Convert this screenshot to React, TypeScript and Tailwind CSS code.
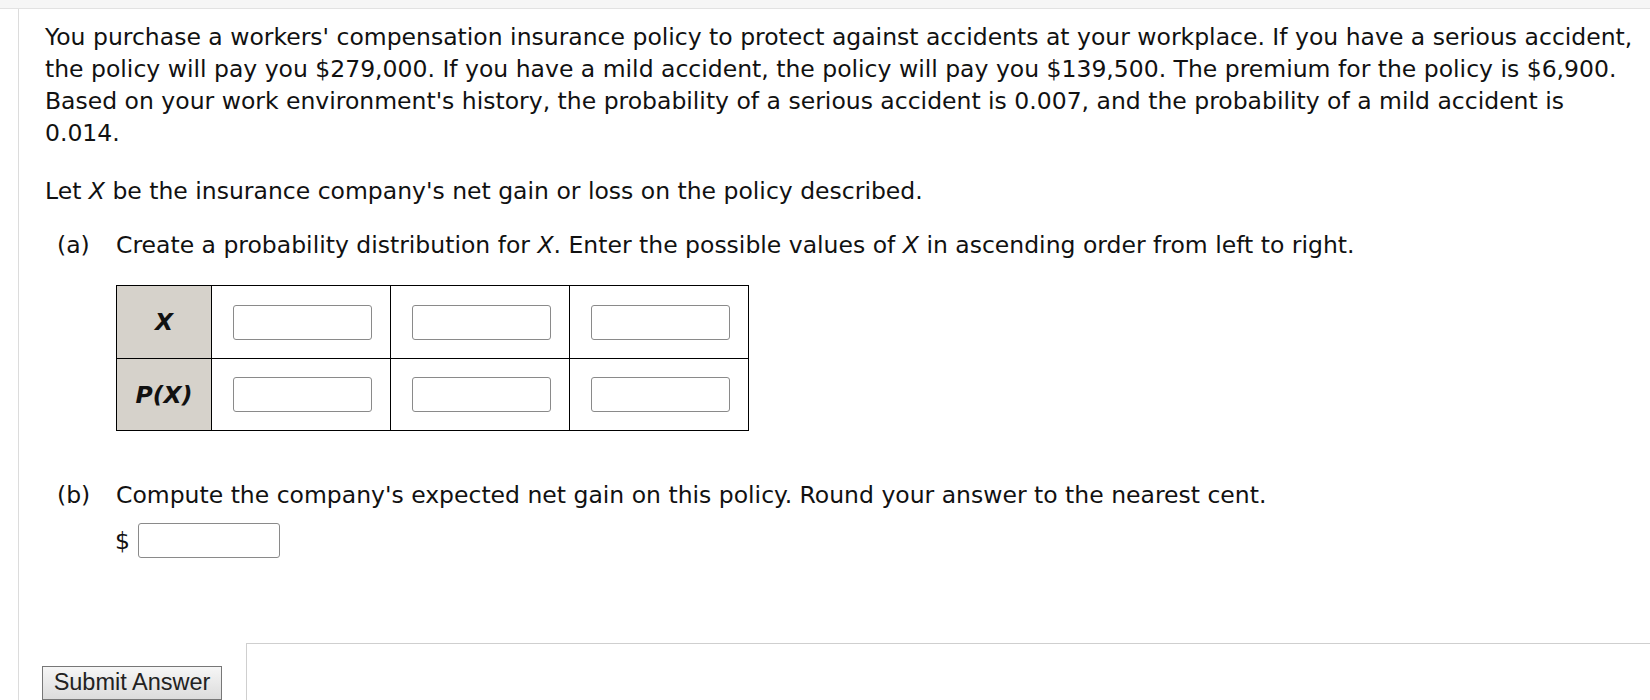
import React from 'react';

const font = { fontFamily: '"DejaVu Sans", Verdana, sans-serif' };

function Box({ className = '' }: { className?: string }) {
  return (
    <input
      type="text"
      className={`h-[35px] w-[139px] rounded-[3px] border border-[#8a8a8a] bg-white outline-none ${className}`}
    />
  );
}

export default function App() {
  const cols = [0, 1, 2];

  return (
    <div className="flex h-[700px] w-full flex-col overflow-hidden bg-white text-[#111]" style={font}>
      <div className="h-[9px] border-b border-[#e2e2e2] bg-[#f6f6f6]" />
      <div className="flex flex-1">
        <div className="w-[19px] shrink-0 border-r border-[#dcdcdc]" />
        <div className="flex flex-1 flex-col pl-[26px] pt-[12px] text-[23.5px] leading-[32px]">
          <p className="whitespace-nowrap">
            You purchase a workers' compensation insurance policy to protect against accidents at your workplace. If you have a serious accident,
            <br />
            the policy will pay you $279,000. If you have a mild accident, the policy will pay you $139,500. The premium for the policy is $6,900.
            <br />
            Based on your work environment's history, the probability of a serious accident is 0.007, and the probability of a mild accident is
            <br />
            0.014.
          </p>

          <p className="mt-[26px]">
            Let <i>X</i> be the insurance company's net gain or loss on the policy described.
          </p>

          <div className="mt-[22px] flex pl-[12px]">
            <span className="w-[59px] shrink-0">(a)</span>
            <span>
              Create a probability distribution for <i>X</i>. Enter the possible values of <i>X</i> in ascending order from left to right.
            </span>
          </div>

          <table className="ml-[71px] mt-[24px] w-fit self-start border-collapse">
            <tbody>
              <tr className="h-[73px]">
                <th className="w-[95px] border border-black bg-[#d6d2cb] text-center font-bold italic">X</th>
                {cols.map(c => (
                  <td key={c} className="w-[179px] border border-black pl-[21px] pr-[18px]">
                    <Box />
                  </td>
                ))}
              </tr>
              <tr className="h-[72px]">
                <th className="border border-black bg-[#d6d2cb] text-center font-bold italic">P(X)</th>
                {cols.map(c => (
                  <td key={c} className="border border-black pl-[21px] pr-[18px]">
                    <Box />
                  </td>
                ))}
              </tr>
            </tbody>
          </table>

          <div className="mt-[48px] flex pl-[12px]">
            <span className="w-[59px] shrink-0">(b)</span>
            <span>Compute the company's expected net gain on this policy. Round your answer to the nearest cent.</span>
          </div>

          <div className="mt-[12px] flex items-center pl-[70px]">
            <span className="w-[23px] shrink-0">$</span>
            <Box className="w-[142px]" />
          </div>

          <div className="mt-auto flex items-end">
            <button
              className="ml-[-3px] h-[34px] w-[180px] border border-[#777] bg-gradient-to-b from-[#f6f6f6] to-[#dcdcdc] text-[23.5px] leading-none text-[#222]"
              style={{ fontFamily: '"Liberation Sans", Arial, sans-serif' }}
            >
              Submit Answer
            </button>
            <div className="ml-[24px] h-[57px] flex-1 border-l border-t border-[#cfcfcf]" />
          </div>
        </div>
      </div>
    </div>
  );
}
